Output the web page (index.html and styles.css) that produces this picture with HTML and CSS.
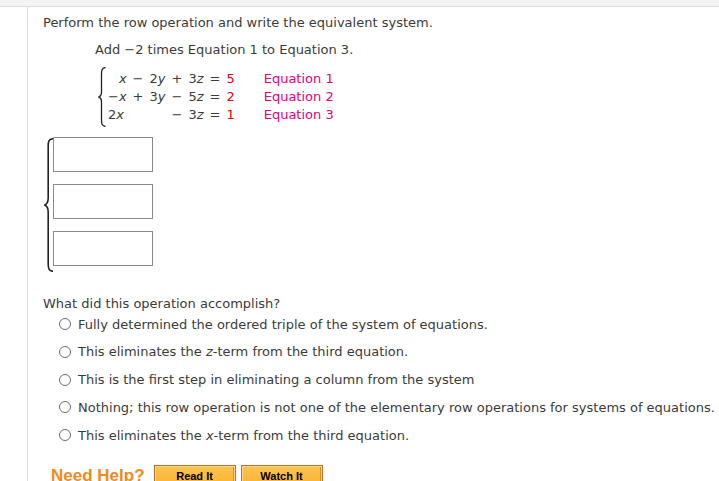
FILE: index.html
```html
<!DOCTYPE html>
<html>
<head>
<meta charset="utf-8">
<link rel="stylesheet" href="styles.css">
</head>
<body>
<div class="topbar"></div>
<div class="page">
  <div class="content">
    <p class="prompt">Perform the row operation and write the equivalent system.</p>
    <p class="instruction">Add &minus;2 times Equation 1 to Equation 3.</p>
    <div class="system">
      <svg class="brace" width="8" height="60" viewBox="0 0 8 60"><path d="M7.5 0.5 C4 1 3.5 3 3.5 7 L3.5 25 C3.5 28 2.5 29.5 0.5 30 C2.5 30.5 3.5 32 3.5 35 L3.5 53 C3.5 57 4 59 7.5 59.5" fill="none" stroke="#222" stroke-width="1.3"/></svg>
      <table class="eqs">
        <tr><td class="r"><i>x</i></td><td>&minus;</td><td>2<i>y</i></td><td>+</td><td>3<i>z</i></td><td>=</td><td class="red">5</td><td class="lbl">Equation 1</td></tr>
        <tr><td class="r">&minus;<i>x</i></td><td>+</td><td>3<i>y</i></td><td>&minus;</td><td>5<i>z</i></td><td>=</td><td class="red">2</td><td class="lbl">Equation 2</td></tr>
        <tr><td class="l">2<i>x</i></td><td></td><td></td><td>&minus;</td><td>3<i>z</i></td><td>=</td><td class="red">1</td><td class="lbl">Equation 3</td></tr>
      </table>
    </div>
    <div class="answer">
      <svg class="bigbrace" width="10" height="134" viewBox="0 0 10 134"><path d="M9 0.7 C5 1.2 4.2 3 4.2 8 L4.2 60 C4.2 64 3 66 0.8 67 C3 68 4.2 70 4.2 74 L4.2 126 C4.2 131 5 132.8 9 133.3" fill="none" stroke="#222" stroke-width="1.6"/></svg>
      <div class="boxes">
        <div class="box"></div>
        <div class="box"></div>
        <div class="box"></div>
      </div>
    </div>
    <p class="question">What did this operation accomplish?</p>
    <ul class="options">
      <li><span class="radio"></span><span>Fully determined the ordered triple of the system of equations.</span></li>
      <li><span class="radio"></span><span>This eliminates the <i>z</i>-term from the third equation.</span></li>
      <li><span class="radio"></span><span>This is the first step in eliminating a column from the system</span></li>
      <li><span class="radio"></span><span>Nothing; this row operation is not one of the elementary row operations for systems of equations.</span></li>
      <li><span class="radio"></span><span>This eliminates the <i>x</i>-term from the third equation.</span></li>
    </ul>
    <div class="help">
      <span class="need">Need Help?</span>
      <span class="btn">Read It</span>
      <span class="btn">Watch It</span>
    </div>
  </div>
</div>
</body>
</html>
```

FILE: styles.css
```css
html, body {
  margin: 0;
  padding: 0;
  background: #fff;
  overflow: hidden;
}
body {
  font-family: "DejaVu Sans", Verdana, sans-serif;
  font-size: 13px;
  color: #3b3b3b;
  width: 719px;
  height: 481px;
}
.topbar {
  height: 6px;
  background: #f4f4f4;
  border-bottom: 1px solid #dcdcdc;
}
.page {
  margin-left: 27px;
  border-left: 1px solid #dcdcdc;
  height: 474px;
  overflow: hidden;
}
.content {
  padding-left: 15px;
  padding-top: 8px;
}
p { margin: 0; }
.prompt {
  line-height: 16px;
}
.instruction {
  margin-top: 11px;
  margin-left: 52px;
  line-height: 16px;
}
.system {
  display: flex;
  align-items: center;
  margin-left: 55px;
  margin-top: 9px;
}
.brace { display: block; margin-right: 2px; }
.eqs {
  border-collapse: collapse;
}
.eqs td {
  padding: 0 3px;
  line-height: 18px;
  height: 18px;
  text-align: right;
  white-space: nowrap;
}
.eqs td.l { text-align: left; padding-left: 0; }
.eqs td.r { padding-left: 0; }
.eqs i { font-style: italic; }
.eqs .red { color: #e8000b; text-align: left; }
.eqs .lbl { color: #e4007c; padding-left: 26px; text-align: left; }
.answer {
  display: flex;
  margin-top: 10px;
  margin-left: 1px;
}
.bigbrace { display: block; margin-top: 1px; }
.boxes {
  display: flex;
  flex-direction: column;
  gap: 12px;
  margin-left: -1px;
}
.box {
  width: 98px;
  height: 33px;
  border: 1px solid #8a8a8a;
}
.question {
  margin-top: 24px;
  line-height: 16px;
}
.options {
  list-style: none;
  margin: 4px 0 0 16px;
  padding: 0;
}
.options li {
  display: flex;
  align-items: center;
  height: 16px;
  margin-bottom: 11.75px;
  white-space: nowrap;
}
.radio {
  display: inline-block;
  width: 10px;
  height: 10px;
  border: 1.5px solid #6b6b6b;
  border-radius: 50%;
  margin-right: 7px;
  flex: none;
}
.help {
  display: flex;
  align-items: flex-start;
  margin-top: 22px;
  margin-left: 8px;
}
.need {
  font-family: "Liberation Sans", Arial, sans-serif;
  font-weight: bold;
  font-size: 17px;
  color: #f08a1c;
  line-height: 20px;
  margin-top: 1px;
  margin-right: 9px;
}
.btn {
  font-family: "Liberation Sans", Arial, sans-serif;
  font-weight: bold;
  font-size: 11px;
  color: #000;
  width: 82px;
  height: 20px;
  box-sizing: border-box;
  border: 1px solid #b5732b;
  box-shadow: inset 0 0 0 1px #ffd68a, inset -1px -1px 0 1px #d98a20;
  background: linear-gradient(#fdc454, #fbb430);
  text-align: center;
  line-height: 20px;
  margin-right: 5px;
}
```
